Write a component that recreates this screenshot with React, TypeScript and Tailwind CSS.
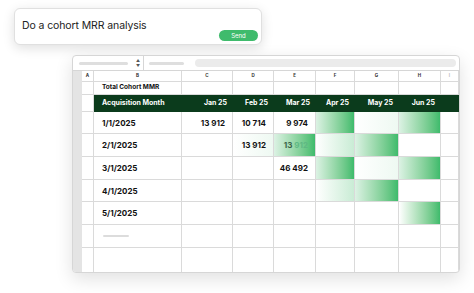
import React from "react";

const COLS = ["w-[9px]", "w-[12px]", "w-[88px]", "w-[51px]", "w-[41px]", "w-[42px]", "w-[39px]", "w-[44px]", "w-[42px]", "w-[18px]"];
const LETTERS = ["A", "B", "C", "D", "E", "F", "G", "H", "I"];
const HEAD = ["Jan 25", "Feb 25", "Mar 25", "Apr 25", "May 25", "Jun 25"];

const PS = "bg-linear-to-r from-[#dcf2e4] to-[#3dbb6c]";
const WP = "bg-linear-to-r from-white to-[#c9ecd5]";
const WF = "bg-linear-to-r from-white to-[#eef9f2]";
const WS = "bg-linear-to-r from-white to-[#3dbb6c]";

type Cell = { t?: React.ReactNode; bg?: string };

const rows: { h: string; label: string; cells: Cell[] }[] = [
  { h: "h-[22px]", label: "1/1/2025", cells: [{ t: "13 912" }, { t: "10 714" }, { t: "9 974" }, { bg: PS }, { bg: WF }, { bg: PS }, {}] },
  {
    h: "h-[23px]",
    label: "2/1/2025",
    cells: [
      {},
      { t: "13 912", bg: WF },
      {
        t: (
          <span>
            <span className="text-[#3a6149]">13 </span>
            <span className="text-[#5fb884]">912</span>
          </span>
        ),
        bg: PS,
      },
      { bg: WP },
      { bg: PS },
      {},
      {},
    ],
  },
  { h: "h-[23px]", label: "3/1/2025", cells: [{}, {}, { t: "46 492" }, { bg: PS }, { bg: WF }, { bg: PS }, {}] },
  { h: "h-[22px]", label: "4/1/2025", cells: [{}, {}, {}, { bg: WP }, { bg: PS }, {}, {}] },
  { h: "h-[23px]", label: "5/1/2025", cells: [{}, {}, {}, {}, {}, { bg: WS }, {}] },
];

const line = "border-r border-b border-[#dadada]";

function Gutter({ h }: { h: string }) {
  return <div className={`${COLS[0]} ${h} shrink-0 bg-[#e4e4e4]`} />;
}

export default function App() {
  return (
    <div className="w-[474px] h-[293px] bg-white overflow-hidden flex flex-col" style={{ fontFamily: "Inter, 'Noto Sans', sans-serif" }}>
      {/* prompt card */}
      <div className="ml-[14px] mt-[8px] w-[248px] h-[37px] rounded-[6px] border border-[#e0e0e0] bg-white shadow-[0_3px_12px_rgba(0,0,0,0.13)] flex flex-col">
        <div className="pl-[7px] pt-[11px] text-[10.5px] tracking-[-0.01em] leading-[12px] text-[#222]">Do a cohort MRR analysis</div>
        <div className="self-end mr-[3px] mt-[-2px] w-[39px] h-[11px] rounded-full bg-[#3fbb6c] text-white text-[6px] leading-[11px] text-center">Send</div>
      </div>

      {/* spreadsheet window */}
      <div className="ml-[72px] mt-[10px] w-[388px] h-[218px] rounded-[4px] border border-[#d6d6d6] bg-white overflow-hidden shadow-[0_6px_18px_rgba(0,0,0,0.12)] flex flex-col">
        {/* toolbar */}
        <div className="h-[15px] shrink-0 border-b border-[#d6d6d6] flex items-center">
          <div className="ml-[6px] w-[49px] h-[3px] rounded-full bg-[#dedede]" />
          <div className="ml-[8px] flex flex-col items-center leading-none text-[#555] text-[4px] gap-[1px]">
            <span>▲</span>
            <span>▼</span>
          </div>
          <div className="ml-[3px] h-full w-px bg-[#d6d6d6]" />
          <div className="ml-[5px] w-[35px] h-[3px] rounded-full bg-[#dedede]" />
          <div className="ml-[11px] w-[261px] h-[8px] rounded-full bg-[#ebebeb]" />
        </div>

        {/* column letters */}
        <div className="flex h-[11px] shrink-0">
          <Gutter h="h-[11px]" />
          {LETTERS.map((l, i) => (
            <div key={l} className={`${COLS[i + 1]} ${line} shrink-0 flex items-center justify-center text-[4.5px] font-bold ${l === "I" ? "text-[#bbb]" : "text-[#333]"}`}>
              {l}
            </div>
          ))}
        </div>

        {/* total cohort row */}
        <div className="flex h-[13px] shrink-0">
          <Gutter h="h-[13px]" />
          {COLS.slice(1).map((c, i) => (
            <div key={i} className={`${c} ${line} shrink-0 flex items-center text-[6.5px] font-bold text-[#111]`}>
              {i === 1 ? <span className="pl-[8px]">Total Cohort MMR</span> : null}
            </div>
          ))}
        </div>

        {/* green header */}
        <div className="flex h-[17px] shrink-0">
          <Gutter h="h-[17px]" />
          <div className={`${COLS[1]} ${line} shrink-0`} />
          <div className="flex-1 flex bg-[#0b3b1c] text-white text-[7px] font-bold items-center">
            <div className={`${COLS[2]} shrink-0 pl-[8px]`}>Acquisition Month</div>
            {HEAD.map((h, i) => (
              <div key={h} className={`${COLS[i + 3]} shrink-0 text-right pr-[6px]`}>
                {h}
              </div>
            ))}
          </div>
        </div>

        {/* data rows */}
        {rows.map((r) => (
          <div key={r.label} className={`flex ${r.h} shrink-0`}>
            <Gutter h={r.h} />
            <div className={`${COLS[1]} ${line} shrink-0`} />
            <div className={`${COLS[2]} ${line} shrink-0 flex items-center pl-[8px] text-[8px] font-bold text-[#111]`}>{r.label}</div>
            {r.cells.map((c, i) => (
              <div key={i} className={`${COLS[i + 3]} ${line} shrink-0 flex items-center justify-end pr-[7px] text-[8px] font-bold text-[#111] ${c.bg ?? ""}`}>
                {c.t}
              </div>
            ))}
          </div>
        ))}

        {/* empty row with placeholder */}
        <div className="flex h-[23px] shrink-0">
          <Gutter h="h-[23px]" />
          <div className={`${COLS[1]} ${line} shrink-0`} />
          <div className={`${COLS[2]} ${line} shrink-0 flex items-center pl-[9px]`}>
            <div className="w-[26px] h-[2px] rounded-full bg-[#dcdcdc]" />
          </div>
          {COLS.slice(3).map((c, i) => (
            <div key={i} className={`${c} ${line} shrink-0`} />
          ))}
        </div>

        {/* last row */}
        <div className="flex flex-1">
          <div className={`${COLS[0]} shrink-0 bg-[#e4e4e4]`} />
          {COLS.slice(1).map((c, i) => (
            <div key={i} className={`${c} border-r border-[#dadada] shrink-0`} />
          ))}
        </div>
      </div>
    </div>
  );
}
